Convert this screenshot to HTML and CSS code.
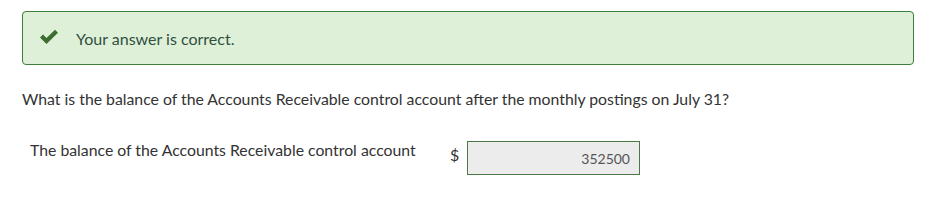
FILE: index.html
```html
<!DOCTYPE html>
<html>
<head>
    <title>Question</title>
    <link rel="stylesheet" href="styles.css">
</head>
<body>
    <div class="alert-correct">
        <svg class="check-icon" width="20" height="16" viewBox="0 0 20 16">
            <path d="M1 8.5 L4 5.5 L7.5 9 L16 0.8 L19 3.8 L7.5 15 Z" fill="#3c6e2f"/>
        </svg>
        <span class="alert-text">Your answer is correct.</span>
    </div>

    <p class="question">What is the balance of the Accounts Receivable control account after the monthly postings on July 31?</p>

    <div class="answer-row">
        <div class="answer-label">The balance of the Accounts Receivable control account</div>
        <span class="currency">$</span>
        <input class="answer-input" type="text" value="352500" readonly>
    </div>
</body>
</html>
```

FILE: styles.css
```css
body {
    margin: 0;
    font-family: Lato, "Open Sans", sans-serif;
    color: #333;
    background: #fff;
}

.alert-correct {
    display: flex;
    align-items: center;
    box-sizing: border-box;
    width: 892px;
    height: 54px;
    margin: 11px 0 0 22px;
    padding-left: 16px;
    background-color: #dff0d8;
    border: 1px solid #3f7e3a;
    border-radius: 4px;
}

.check-icon {
    margin-top: -3px;
}

.alert-text {
    margin-left: 17px;
    font-size: 16px;
    color: #2f4f3f;
}

.question {
    margin: 23px 0 0 22px;
    font-size: 15.8px;
    line-height: 22px;
}

.answer-row {
    display: flex;
    align-items: flex-start;
    margin: 29px 0 0 30px;
}

.answer-label {
    width: 420px;
    font-size: 15.8px;
    line-height: 22px;
}

.currency {
    font-size: 16px;
    line-height: 22px;
    margin-top: 5px;
    width: 17px;
}

.answer-input {
    box-sizing: border-box;
    width: 173px;
    height: 34px;
    margin-top: 2px;
    padding: 0 9px;
    border: 1px solid #4c7a46;
    background-color: #ececec;
    font-family: Lato, "Open Sans", sans-serif;
    font-size: 14px;
    color: #555;
    text-align: right;
}
```
